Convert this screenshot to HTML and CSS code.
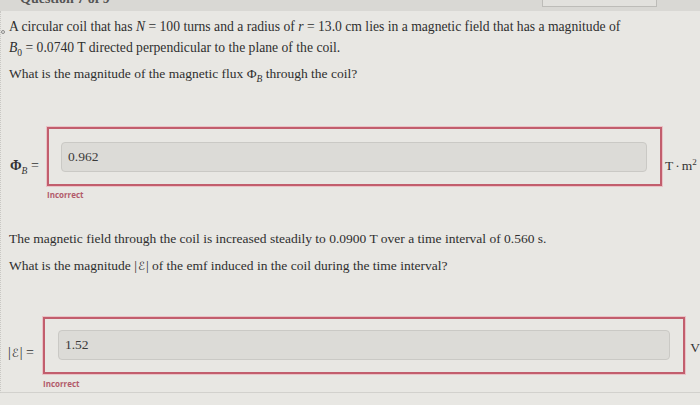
FILE: index.html
```html
<!DOCTYPE html>
<html>
<head>
<meta charset="utf-8">
<link rel="stylesheet" href="styles.css">
</head>
<body>
<div class="topbar">
  <span class="topbar-title">Question 7 of 9</span>
  <span class="topbar-tab"></span>
</div>
<div class="content">
  <span class="marker"></span>
  <p class="para para-first">A circular coil that has <i>N</i> = 100 turns and a radius of <i>r</i> = 13.0 cm lies in a magnetic field that has a magnitude of<br><i>B</i><sub>0</sub> = 0.0740 T directed perpendicular to the plane of the coil.</p>
  <p class="para">What is the magnitude of the magnetic flux Φ<sub><i>B</i></sub> through the coil?</p>

  <div class="answer answer-one">
    <div class="answer-row">
      <span class="answer-label"><span class="phi">Φ</span><sub><i>B</i></sub> =</span>
      <div class="answer-box">
        <div class="answer-input">0.962</div>
      </div>
      <span class="answer-unit">T<span class="dot">·</span>m<sup>2</sup></span>
    </div>
    <div class="answer-status">Incorrect</div>
  </div>

  <p class="para para-second">The magnetic field through the coil is increased steadily to 0.0900 T over a time interval of 0.560 s.</p>
  <p class="para">What is the magnitude |<span class="script">ℰ</span>| of the emf induced in the coil during the time interval?</p>

  <div class="answer answer-two">
    <div class="answer-row">
      <span class="answer-label">|<span class="script">ℰ</span>| =</span>
      <div class="answer-box">
        <div class="answer-input">1.52</div>
      </div>
      <span class="answer-unit">V</span>
    </div>
    <div class="answer-status">Incorrect</div>
  </div>
</div>
</body>
</html>
```

FILE: styles.css
```css
* { box-sizing: border-box; }

html, body {
  margin: 0;
  padding: 0;
}

body {
  width: 700px;
  height: 405px;
  overflow: hidden;
  background: #e8e7e3;
  font-family: "Liberation Serif", "Times New Roman", serif;
  font-size: 13.5px;
  color: #2f2f2f;
}

.topbar {
  height: 11px;
  background: #d9d8d4;
  overflow: hidden;
  display: flex;
  align-items: flex-start;
  position: relative;
}

.topbar-title {
  margin-left: 20px;
  margin-top: -9px;
  font-size: 14px;
  color: #555;
  font-weight: bold;
}

.topbar-tab {
  margin-left: auto;
  margin-right: 43px;
  width: 115px;
  height: 7px;
  border: 1px solid #bdbcb8;
  border-top: none;
  background: #e2e1dd;
}

.content {
  position: relative;
  padding: 5px 0 0 8px;
  border-left: 1px dotted #c9c8c4;
  height: 382px;
  border-bottom: 1px solid #d2d1cd;
}

.marker {
  position: absolute;
  left: 0;
  top: 19px;
  width: 4px;
  height: 4px;
  border: 1px solid #8a8a8a;
  border-radius: 50%;
}

.para {
  margin: 0 0 5px;
  line-height: 21px;
}

.para-first {
  font-size: 13.65px;
  margin-bottom: 5px;
}

.para sub, .answer-label sub {
  font-size: 9.5px;
  line-height: 0;
}

.script {
  font-family: "DejaVu Sans", sans-serif;
  font-style: normal;
  font-size: 11.5px;
  padding: 0 1px;
}

.phi {
  font-weight: bold;
}

.answer {
  margin-top: 43px;
}

.answer-row {
  display: flex;
  align-items: center;
}

.answer-label {
  font-size: 14px;
  width: 38px;
  padding-top: 18px;
  padding-left: 1px;
  white-space: nowrap;
  color: #333;
}

.answer-box {
  border: 2px solid #c25e6d;
  box-shadow: 0 0 0 1px rgba(235, 170, 178, 0.6);
  padding: 13px 13px 12px 12px;
}

.answer-input {
  height: 30px;
  background: #dcdbd7;
  border: 1px solid #cac9c5;
  border-radius: 4px;
  padding: 0 6px;
  display: flex;
  align-items: center;
  font-size: 13.5px;
  color: #3a3a3a;
}

.answer-unit {
  margin-left: 3px;
  padding-top: 18px;
  font-size: 13.5px;
  white-space: nowrap;
  color: #333;
}

.dot {
  margin: 0 2px;
}

.answer-unit sup {
  font-size: 9px;
  line-height: 0;
}

.answer-status {
  font-family: "Open Sans", "Liberation Sans", sans-serif;
  font-size: 8px;
  font-weight: bold;
  color: #b25a6a;
  margin-top: 3px;
}

.answer-one .answer-box {
  width: 615px;
  height: 59px;
}

.answer-one .answer-status {
  margin-left: 38px;
}

.para-second {
  margin-top: 28px;
  margin-bottom: 6px;
}

.answer-two {
  margin-top: 40px;
}

.answer-two .answer-label {
  margin-left: -2px;
  width: 36px;
  padding-top: 14px;
}

.answer-two .answer-box {
  width: 644px;
  height: 57px;
  padding: 11px 13px 12px 13px;
}

.answer-two .answer-unit {
  margin-left: 5px;
  padding-top: 4px;
}

.answer-two .answer-status {
  margin-left: 34px;
  margin-top: 4px;
}
```
